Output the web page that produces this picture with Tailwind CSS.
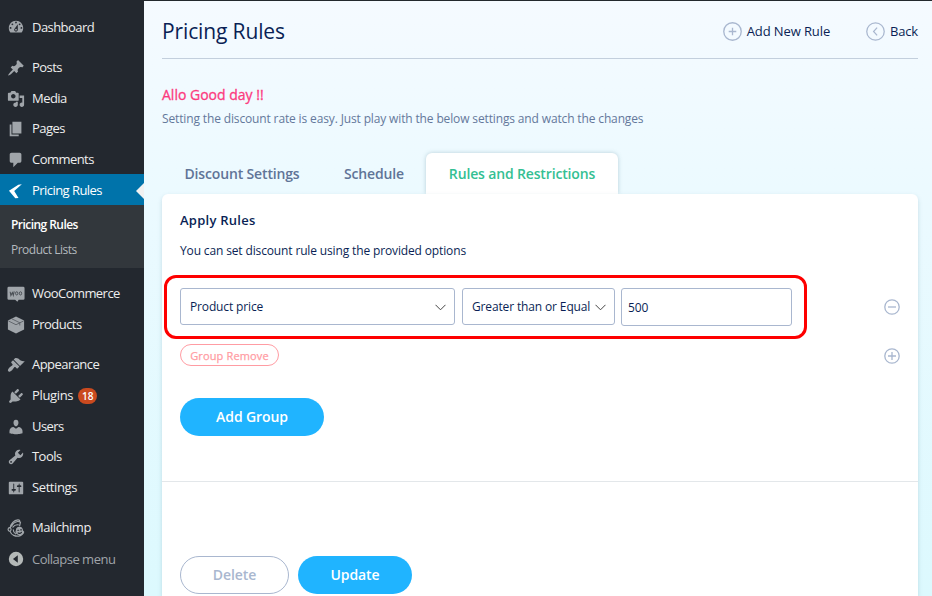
<!DOCTYPE html>
<html lang="en">
<head>
    <meta charset="UTF-8">
    <meta name="viewport" content="width=device-width, initial-scale=1.0">
    <script src="https://cdn.jsdelivr.net/npm/@tailwindcss/browser@4"></script>
    <title>Pricing Rules</title>
</head>
<body class="flex h-[596px] w-[932px] overflow-hidden bg-[#23282d] font-['Open_Sans',sans-serif] text-[#0a1f55]">
    <!-- Admin menu -->
    <nav class="h-[596px] w-36 shrink-0 bg-[#23282f] pt-[12px] text-[13px] tracking-[-0.55px] text-[#eee]">
        <a class="flex h-[30.7px] items-center gap-[7px] pl-[7px]">
            <svg class="size-[18px] fill-[#a0a5aa]" viewBox="0 0 20 20"><path d="M3.76 16h12.48c1.1-1.37 1.76-3.11 1.76-5 0-4.42-3.58-8-8-8s-8 3.58-8 8c0 1.89.66 3.63 1.76 5zM10 4c.55 0 1 .45 1 1s-.45 1-1 1-1-.45-1-1 .45-1 1-1zM6 6c.55 0 1 .45 1 1s-.45 1-1 1-1-.45-1-1 .45-1 1-1zm8 0c.55 0 1 .45 1 1s-.45 1-1 1-1-.45-1-1 .45-1 1-1zm-5.37 5.55L12 7v6c0 1.1-.9 2-2 2s-2-.9-2-2c0-.57.24-1.08.63-1.45zM4 10c.55 0 1 .45 1 1s-.45 1-1 1-1-.45-1-1 .45-1 1-1zm12 0c.55 0 1 .45 1 1s-.45 1-1 1-1-.45-1-1 .45-1 1-1zm-5 3c0-.55-.45-1-1-1s-1 .45-1 1 .45 1 1 1 1-.45 1-1z"/></svg>
            Dashboard
        </a>
        <a class="mt-[9px] flex h-[30.7px] items-center gap-[7px] pt-[2px] pl-[7px]">
            <svg class="size-[18px] fill-[#a0a5aa]" viewBox="0 0 20 20"><path d="M10.44 3.02l1.82-1.82 6.36 6.35-1.83 1.82c-1.05-.68-2.48-.57-3.41.36l-.75.75c-.92.93-1.04 2.35-.35 3.41l-1.83 1.82-2.41-2.41-2.8 2.79c-.42.42-3.38 2.71-3.8 2.29s1.86-3.39 2.28-3.81l2.79-2.79L4.1 9.36l1.83-1.82c1.05.69 2.48.57 3.4-.36l.75-.75c.93-.92 1.05-2.35.36-3.41z"/></svg>
            Posts
        </a>
        <a class="flex h-[30.7px] items-center gap-[7px] pt-[2px] pl-[7px]">
            <svg class="size-[18px] fill-[#a0a5aa]" viewBox="0 0 20 20"><path d="M13 11V4c0-.55-.45-1-1-1h-1.67L9 1H5L3.67 3H2c-.55 0-1 .45-1 1v7c0 .55.45 1 1 1h10c.55 0 1-.45 1-1zM7 4.5c1.38 0 2.5 1.12 2.5 2.5S8.38 9.5 7 9.5 4.5 8.38 4.5 7 5.62 4.5 7 4.5zM14 6h5v10.5c0 1.38-1.12 2.5-2.5 2.5S14 17.88 14 16.5s1.12-2.5 2.5-2.5c.17 0 .34.02.5.05V9h-3V6zm-4 8.05V13h2v3.5c0 1.38-1.12 2.5-2.5 2.5S7 17.88 7 16.5 8.12 14 9.5 14c.17 0 .34.02.5.05z"/></svg>
            Media
        </a>
        <a class="flex h-[30.7px] items-center gap-[7px] pt-px pl-[7px]">
            <svg class="size-[18px] fill-[#a0a5aa]" viewBox="0 0 20 20"><path d="M6 15V2h10v13H6zm-1 1h8v2H3V5h2v11z"/></svg>
            Pages
        </a>
        <a class="flex h-[30.7px] items-center gap-[7px] pt-[2px] pl-[7px]">
            <svg class="size-[18px] fill-[#a0a5aa]" viewBox="0 0 20 20"><path d="M5 2h9c1.1 0 2 .9 2 2v7c0 1.1-.9 2-2 2h-2l-5 5v-5H5c-1.1 0-2-.9-2-2V4c0-1.1.9-2 2-2z"/></svg>
            Comments
        </a>
        <a class="relative flex h-[30.7px] items-center gap-[7px] bg-[#0073aa] pt-[2px] pl-[7px] text-white">
            <svg class="size-[18px] fill-white" viewBox="0 0 20 20"><path d="M16.5 2.5L12.6 3 2.2 9.8l7 8.2 3.6-.1L8 10.1z"/></svg>
            Pricing Rules
            <span class="absolute right-0 border-y-8 border-r-8 border-y-transparent border-r-[#f1f1f1]"></span>
        </a>
        <div class="flex h-[63px] flex-col bg-[#32373c] pt-[7px] pl-[11px] text-xs leading-[25px]">
            <a class="font-semibold text-white">Pricing Rules</a>
            <a class="tracking-[-0.5px] text-[#b4b9be]">Product Lists</a>
        </div>
        <a class="mt-[10.500px] flex h-[30.7px] items-center gap-[7px] pl-[7px]">
            <svg class="size-[18px]" viewBox="0 0 20 20">
                <path class="fill-[#a0a5aa]" d="M2 2h16q1.5 0 1.5 1.500v11.500q0 1.500-1.500 1.500h-5l-1.500 2-2.500-2H2Q.5 16.500.5 15V3.500Q.5 2 2 2z"/>
                <path class="fill-none stroke-[#4b5056]" stroke-width="1.200" d="M3.500 7.500l.8 4 1.700-3 1 3 1-4.500"/>
                <ellipse class="fill-none stroke-[#4b5056]" stroke-width="1.100" cx="10.800" cy="9.300" rx="1.300" ry="1.800"/>
                <ellipse class="fill-none stroke-[#4b5056]" stroke-width="1.100" cx="15" cy="9.300" rx="1.300" ry="1.800"/>
            </svg>
            WooCommerce
        </a>
        <a class="flex h-[30.7px] items-center gap-[7px] pt-px pl-[7px]">
            <svg class="size-[18px]" viewBox="0 0 20 20">
                <path class="fill-[#a0a5aa]" d="M10 .5l9 4.500v10L10 19.500 1 15V5z"/>
                <path class="fill-none stroke-[#4b5056]" stroke-width=".8" d="M1.500 5.500L10 9.700l8.500-4.200M5.500 3.200l8.700 4.300v3"/>
            </svg>
            Products
        </a>
        <a class="mt-[9.500px] flex h-[30.7px] items-center gap-[7px] pl-[7px]">
            <svg class="size-[18px] fill-[#a0a5aa]" viewBox="0 0 20 20"><path d="M14.48 11.06L7.41 3.99l1.5-1.5c.5-.56 2.3-.47 3.51.32 1.21.8 1.43 1.28 2.91 2.1 1.18.64 2.45 1.26 4.45.85zm-.71.71L6.7 4.7 4.93 6.47c-.39.39-.39 1.02 0 1.41l1.06 1.06c.39.39.39 1.03 0 1.42-.6.6-1.43 1.11-2.21 1.69-.35.26-.7.53-1.01.84C1.43 14.23.4 16.08 1.4 17.07c.99 1 2.84-.03 4.18-1.36.31-.31.58-.66.85-1.02.57-.78 1.08-1.61 1.69-2.21.39-.39 1.02-.39 1.41 0l1.06 1.06c.39.39 1.02.39 1.41 0z"/></svg>
            Appearance
        </a>
        <a class="flex h-[30.7px] items-center gap-[7px] pt-px pl-[7px]">
            <svg class="size-[18px] fill-[#a0a5aa]" viewBox="0 0 20 20"><path d="M13.11 4.36L9.87 7.6 8 5.73l3.24-3.24c.35-.34 1.05-.2 1.56.32.52.51.66 1.21.31 1.55zm-8 1.77l.91-1.12 9.01 9.01-1.19.84c-.71.71-2.63 1.16-3.82 1.16H6.14L4.9 17.26c-.59.59-1.54.59-2.12 0-.59-.58-.59-1.53 0-2.12l1.24-1.24v-3.88c0-1.13.4-3.19 1.09-3.89zm7.26 3.97l3.24-3.24c.34-.35 1.04-.21 1.55.31.52.51.66 1.21.31 1.55l-3.24 3.25z"/></svg>
            <span class="tracking-[-0.35px]">Plugins</span>
            <span class="-ml-[2px] flex h-4 w-[19px] items-center justify-center rounded-full bg-[#ca4a1f] text-[10px] font-semibold tracking-normal text-white">18</span>
        </a>
        <a class="flex h-[30.7px] items-center gap-[7px] pt-[1.500px] pl-[7px]">
            <svg class="size-[18px] fill-[#a0a5aa]" viewBox="0 0 20 20"><path d="M10 9.25c-2.27 0-2.73-3.44-2.73-3.44C7 4.02 7.82 2 9.97 2c2.16 0 2.98 2.02 2.71 3.81 0 0-.41 3.44-2.68 3.44zm0 2.57L12.72 10c2.39 0 4.52 2.33 4.52 4.53v2.49s-3.65 1.13-7.24 1.13c-3.65 0-7.24-1.13-7.24-1.13v-2.49c0-2.25 1.94-4.48 4.47-4.48z"/></svg>
            Users
        </a>
        <a class="flex h-[30.7px] items-center gap-[7px] pl-[7px]">
            <svg class="size-[18px] fill-[#a0a5aa]" viewBox="0 0 20 20"><path d="M16.68 9.77c-1.34 1.34-3.3 1.67-4.95.99l-5.41 6.52c-.99.99-2.59.99-3.58 0s-.99-2.59 0-3.57l6.52-5.42c-.68-1.65-.35-3.61.99-4.95 1.28-1.28 3.12-1.62 4.72-1.06l-2.89 2.89 2.82 2.82 2.86-2.87c.53 1.58.18 3.39-1.08 4.65zM3.81 16.21c.4.39 1.04.39 1.43 0 .4-.4.4-1.04 0-1.43-.39-.4-1.03-.4-1.43 0-.39.39-.39 1.03 0 1.43z"/></svg>
            Tools
        </a>
        <a class="flex h-[30.7px] items-center gap-[7px] pt-px pl-[7px] tracking-[-0.4px]">
            <svg class="size-[18px] fill-[#a0a5aa]" viewBox="0 0 20 20"><path d="M18 16V4c0-.55-.45-1-1-1H3c-.55 0-1 .45-1 1v12c0 .55.45 1 1 1h14c.55 0 1-.45 1-1zM8 11h1c.55 0 1 .45 1 1s-.45 1-1 1H8v1.5c0 .28-.22.5-.5.5s-.5-.22-.5-.5V13H6c-.55 0-1-.45-1-1s.45-1 1-1h1V5.5c0-.28.22-.5.5-.5s.5.22.5.5V11zm5-2h-1c-.55 0-1-.45-1-1s.45-1 1-1h1V5.5c0-.28.22-.5.5-.5s.5.22.5.5V7h1c.55 0 1 .45 1 1s-.45 1-1 1h-1v5.5c0 .28-.22.5-.5.5s-.5-.22-.5-.5V9z"/></svg>
            Settings
        </a>
        <a class="mt-[9px] flex h-[30.7px] items-center gap-[7px] pt-px pl-[7px] tracking-[-0.45px]">
            <svg class="size-[18px] fill-none stroke-[#a0a5aa]" stroke-width="1.300" stroke-linecap="round" viewBox="0 0 20 20">
                <path d="M3.500 10C4 5 8 1.500 12 1c2-.2 2.500 1 1.500 2l1.500.5-1 4M5 8c2-4 5-5 7.500-5.500M3 9.500c-2 0-2.500 3-.5 4 1 .4 2-.5 2-2S4 9.500 3 9.500zM3.500 14c1.500 4 6 5.500 9.500 5 2.500-.4 4.500-2 5.500-4.500"/>
                <path class="fill-[#a0a5aa]" d="M11 10.500c1.500-1.500 4.500-1.500 5.500 0l.8 2.500c1.500 1 1 3.500-1.300 4-2.500.8-5.500-.5-6-2.500z"/>
                <path class="stroke-[#23282f]" d="M12 12.500h1M15.200 12h.8M12.500 15.500c1 .7 2.500.5 3.500-.7"/>
                <path d="M6.500 9c1.500-2 3.500-3 6-2.500M7 12c0 2 .8 3.500 2.500 4.500"/>
            </svg>
            Mailchimp
        </a>
        <a class="flex h-[34px] items-center gap-[7px] pt-px pl-[7px] tracking-[-0.5px] text-[#a0a5aa]">
            <svg class="-mt-[3px] size-[18px] fill-[#b4b9b8]" fill-rule="evenodd" viewBox="0 0 20 20"><path d="M10 2a8 8 0 100 16 8 8 0 000-16zm2 3.800v8.400L6.600 10z"/></svg>
            Collapse menu
        </a>
    </nav>

    <!-- Page content -->
    <main class="mt-px flex h-[595px] w-[788px] flex-col bg-linear-to-b from-[#f5faff] via-[#ebfaff] via-35% to-[#dcf9fe] px-[18px] pr-[14px]">
        <header class="flex h-[58px] shrink-0 items-center border-b border-[#c3cfdd] pt-[4px]">
            <h1 class="flex-1 text-[21px] tracking-[-0.13px]">Pricing Rules</h1>
            <a class="flex items-center gap-[5px] text-[13px] tracking-[-0.1px]">
                <svg class="size-[19px] fill-none stroke-[#a9b7cf]" stroke-width="1.400" viewBox="0 0 20 20"><circle cx="10" cy="10" r="9.200"/><path d="M10 6v8M6 10h8"/></svg>
                Add New Rule
            </a>
            <a class="ml-9 flex items-center gap-[5px] text-[13px] tracking-[-0.2px]">
                <svg class="size-[19px] fill-none stroke-[#a9b7cf]" stroke-width="1.300" viewBox="0 0 20 20"><circle cx="10" cy="10" r="9.200"/><path d="M11.700 6l-3.700 4 3.700 4"/></svg>
                Back
            </a>
        </header>
        <p class="mt-[26px] text-sm leading-5 text-[#fc3a7e] [-webkit-text-stroke:0.3px]">Allo Good day !!</p>
        <p class="mt-[5px] text-xs leading-[18px] tracking-[-0.14px] text-[#64789b]">Setting the discount rate is easy. Just play with the below settings and watch the changes</p>

        <div class="mt-[25px] flex h-[41px] shrink-0 text-sm font-semibold tracking-[-0.15px] text-[#607497]">
            <a class="flex w-[160px] items-center justify-center">Discount Settings</a>
            <a class="flex w-[104px] items-center justify-center">Schedule</a>
            <a class="flex w-48 items-center justify-center rounded-t-md bg-white text-[#34bf93] shadow-[0_0_4px_rgba(80,130,140,.35)]">Rules and Restrictions</a>
        </div>

        <section class="relative flex flex-1 flex-col rounded-t-md bg-white shadow-[0_2px_4px_rgba(80,130,150,.25)]">
            <div class="h-[288px] shrink-0 border-b border-[#e3e7ea] px-[18px] pt-[16px]">
                <h2 class="text-[13px] leading-5 font-semibold tracking-[0.25px]">Apply Rules</h2>
                <p class="mt-[12px] text-xs leading-[18px] tracking-[-0.14px]">You can set discount rule using the provided options</p>

                <!-- Highlighted rule row -->
                <div class="mt-[15px] flex items-center">
                    <div class="-ml-4 flex h-16 w-[643px] gap-[7px] rounded-xl border-3 border-[#fe0000] pt-[10px] pl-[13px] text-xs tracking-[-0.14px]">
                        <div class="flex h-[37px] w-[275px] items-center justify-between rounded-[3px] border border-[#a9b7cf] pt-px pr-2 pl-[9px]">
                            Product price
                            <svg class="h-[7px] w-[11px] fill-none stroke-[#444]" viewBox="0 0 11 7"><path d="M.5.800l5 5 5-5"/></svg>
                        </div>
                        <div class="flex h-[37px] w-[153px] items-center justify-between rounded-[3px] border border-[#a9b7cf] pt-px pr-2 pl-[9px]">
                            Greater than or Equal
                            <svg class="h-[7px] w-[11px] fill-none stroke-[#444]" viewBox="0 0 11 7"><path d="M.5.800l5 5 5-5"/></svg>
                        </div>
                        <div class="-ml-px flex h-[38px] w-[171px] items-center rounded-[3px] border border-[#a9b7cf] pt-px pl-[6px]">500</div>
                    </div>
                    <svg class="ml-auto size-4 fill-none stroke-[#a9b7cf]" stroke-width="1.300" viewBox="0 0 16 16"><circle cx="8" cy="8" r="7.200"/><path d="M4 8h8"/></svg>
                </div>
                <div class="mt-[5px] flex items-center justify-between">
                    <a class="flex h-[22px] w-[99px] items-center justify-center rounded-full border border-[#ff9ca3] pt-[2px] text-[11px] tracking-[0.15px] text-[#ff9ca3] [-webkit-text-stroke:0.25px]">Group Remove</a>
                    <svg class="mt-[2px] size-4 fill-none stroke-[#a9b7cf]" stroke-width="1.300" viewBox="0 0 16 16"><circle cx="8" cy="8" r="7.200"/><path d="M4 8h8M8 4v8"/></svg>
                </div>
                <a class="mt-8 flex h-[38px] w-36 items-center justify-center rounded-full bg-[#20b4ff] text-sm font-semibold tracking-[-0.1px] text-white">Add Group</a>
            </div>
            <div class="flex gap-[9px] px-[18px] pt-[74px] text-sm font-semibold tracking-[-0.1px]">
                <a class="flex h-[38px] w-[109px] items-center justify-center rounded-full border border-[#a9b7cf] text-[#a9b7cf]">Delete</a>
                <a class="flex h-[38px] w-[114px] items-center justify-center rounded-full bg-[#20b4ff] text-white">Update</a>
            </div>
        </section>
    </main>
</body>
</html>
